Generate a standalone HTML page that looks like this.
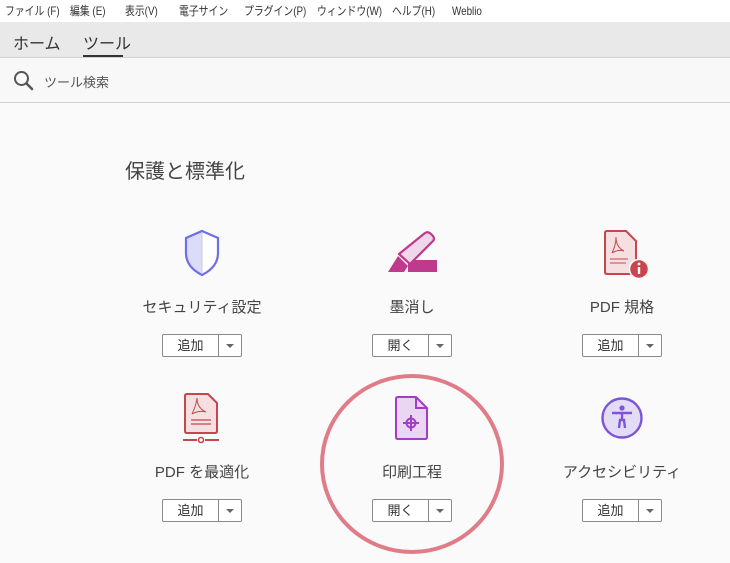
<!DOCTYPE html>
<html><head><meta charset="utf-8"><style>
*{margin:0;padding:0;box-sizing:border-box}
body{width:730px;height:563px;overflow:hidden;background:#fafafa;font-family:"Liberation Sans","Noto Sans CJK JP",sans-serif;color:#4b4b4b;position:relative}
.menu{position:absolute;left:0;top:0;width:730px;height:22px;background:#fff;font-size:12px;color:#333}
.menu span{position:absolute;top:3px;line-height:16px;white-space:nowrap;transform:scaleX(0.82);transform-origin:0 0}
.tabs{position:absolute;left:0;top:22px;width:730px;height:36px;background:#e9e9e9;border-bottom:1px solid #d0d0d0}
.tabs span{position:absolute;top:8px;font-size:16px;color:#333}
.ul{position:absolute;left:83px;top:33px;width:40px;height:2px;background:#333}
.search{position:absolute;left:0;top:59px;width:730px;height:44px;background:#f8f8f8;border-bottom:1px solid #cfcfcf}
.h{position:absolute;left:125px;top:155px;font-size:20px;color:#444}
.lab{position:absolute;width:200px;text-align:center;font-size:15px;color:#444;white-space:nowrap}
.btn{position:absolute;width:80px;height:23px;border:1px solid #8a8a8a;border-radius:2px;background:#fff;font-size:13px;color:#333}
.btn .t{position:absolute;left:0;top:1px;width:55px;text-align:center;line-height:19px}
.btn .d{position:absolute;left:55px;top:0;width:1px;height:21px;background:#8a8a8a}
.btn .a{position:absolute;left:63px;top:9px;border-left:4px solid transparent;border-right:4px solid transparent;border-top:4px solid #666}
svg{position:absolute}
</style></head><body>
<div class="menu">
<span style="left:5px">ファイル (F)</span><span style="left:70px">編集 (E)</span><span style="left:125px">表示(V)</span><span style="left:179px">電子サイン</span><span style="left:244px">プラグイン(P)</span><span style="left:317px">ウィンドウ(W)</span><span style="left:392px">ヘルプ(H)</span><span style="left:452px">Weblio</span>
</div>
<div class="tabs"><span style="left:13px">ホーム</span><span style="left:83px">ツール</span><div class="ul"></div></div>
<div class="search">
<svg style="left:13px;top:11px" width="22" height="22" viewBox="0 0 22 22"><circle cx="8.5" cy="8.5" r="6.5" fill="none" stroke="#555" stroke-width="2"/><line x1="13.5" y1="13.5" x2="19" y2="19" stroke="#555" stroke-width="2.5" stroke-linecap="round"/></svg>
<span style="position:absolute;left:44px;top:13px;font-size:13px;color:#555">ツール検索</span>
</div>
<div class="h">保護と標準化</div>

<svg style="left:183px;top:229px" width="38" height="48" viewBox="0 0 38 48"><path d="M19 2 L35 9 V24 C35 35 27 42 19 46 C11 42 3 35 3 24 V9 Z" fill="#dcdcf8"/><path d="M19 2 L35 9 V24 C35 35 27 42 19 46 Z" fill="#fff"/><path d="M19 2 L35 9 V24 C35 35 27 42 19 46 C11 42 3 35 3 24 V9 Z" fill="none" stroke="#6e6ee8" stroke-width="2.2"/><line x1="19" y1="3" x2="19" y2="45" stroke="#c8c8ee" stroke-width="1"/></svg>
<svg style="left:386px;top:230px" width="52" height="46" viewBox="0 0 52 46"><rect x="22" y="30" width="29" height="12" fill="#bf3a8c"/><path d="M39 3 Q42 1 45 4 L47 6 Q49 9 47 11 L24 34 L13 24 Z" fill="#f0d6ea" stroke="#bf3a8c" stroke-width="2.2" stroke-linejoin="round"/><path d="M12 26 L22 36 L18 42 L2 42 Z" fill="#bf3a8c"/></svg>
<svg style="left:602px;top:229px" width="50" height="50" viewBox="0 0 50 50"><path d="M3 4 Q3 2 5 2 H24 L34 12 V43 Q34 45 32 45 H5 Q3 45 3 43 Z" fill="#f6dfe0" stroke="#c8454e" stroke-width="2"/><path d="M10 24 Q14 16 14 8 Q14 18 22 22 Q16 20 10 24" fill="none" stroke="#c8454e" stroke-width="1"/><line x1="8" y1="30" x2="26" y2="30" stroke="#c8454e"/><line x1="8" y1="34" x2="24" y2="34" stroke="#c8454e"/><circle cx="37" cy="40" r="9.5" fill="#c8454e" stroke="#fafafa" stroke-width="1.5"/><rect x="35.8" y="38" width="2.4" height="7" fill="#fff"/><circle cx="37" cy="35" r="1.4" fill="#fff"/></svg>
<svg style="left:182px;top:392px" width="40" height="54" viewBox="0 0 40 54"><path d="M3 4 Q3 2 5 2 H26 L35 11 V39 Q35 41 33 41 H5 Q3 41 3 39 Z" fill="#f6dfe0" stroke="#c8454e" stroke-width="2"/><path d="M10 22 Q14 14 15 6 Q15 16 24 20 Q17 18 10 22" fill="none" stroke="#c8454e" stroke-width="1"/><line x1="9" y1="28" x2="29" y2="28" stroke="#c8454e" stroke-width="1.2"/><line x1="9" y1="32" x2="29" y2="32" stroke="#c8454e" stroke-width="1.2"/><line x1="1" y1="48" x2="15" y2="48" stroke="#c8454e" stroke-width="2"/><line x1="23" y1="48" x2="37" y2="48" stroke="#c8454e" stroke-width="2"/><circle cx="19" cy="48" r="2.5" fill="#fff" stroke="#c8454e" stroke-width="1.6"/></svg>
<svg style="left:394px;top:396px" width="38" height="46" viewBox="0 0 38 46"><path d="M2 3 Q2 1 4 1 H22 L33 12 V41 Q33 43 31 43 H4 Q2 43 2 41 Z" fill="#ead6f2" stroke="#a43cc8" stroke-width="2"/><path d="M22 1 V12 H33" fill="none" stroke="#a43cc8" stroke-width="2"/><circle cx="17" cy="27" r="4.5" fill="none" stroke="#a43cc8" stroke-width="2"/><line x1="17" y1="19" x2="17" y2="35" stroke="#a43cc8" stroke-width="2"/><line x1="9" y1="27" x2="25" y2="27" stroke="#a43cc8" stroke-width="2"/></svg>
<svg style="left:600px;top:396px" width="44" height="44" viewBox="0 0 44 44"><circle cx="22" cy="22" r="19.5" fill="#e4dcf6" stroke="#7c55d8" stroke-width="2.4"/><circle cx="22" cy="12" r="2.6" fill="#7c55d8"/><path d="M12 17 H32 M22 17 V25 M19 32 L20 24 H24 L25 32" fill="none" stroke="#7c55d8" stroke-width="2.4"/></svg>

<div class="lab" style="left:102px;top:296px">セキュリティ設定</div>
<div class="lab" style="left:312px;top:296px">墨消し</div>
<div class="lab" style="left:522px;top:296px">PDF 規格</div>
<div class="lab" style="left:102px;top:461px">PDF を最適化</div>
<div class="lab" style="left:312px;top:461px">印刷工程</div>
<div class="lab" style="left:522px;top:461px">アクセシビリティ</div>

<div class="btn" style="left:162px;top:334px"><div class="t">追加</div><div class="d"></div><div class="a"></div></div>
<div class="btn" style="left:372px;top:334px"><div class="t">開く</div><div class="d"></div><div class="a"></div></div>
<div class="btn" style="left:582px;top:334px"><div class="t">追加</div><div class="d"></div><div class="a"></div></div>
<div class="btn" style="left:162px;top:499px"><div class="t">追加</div><div class="d"></div><div class="a"></div></div>
<div class="btn" style="left:372px;top:499px"><div class="t">開く</div><div class="d"></div><div class="a"></div></div>
<div class="btn" style="left:582px;top:499px"><div class="t">追加</div><div class="d"></div><div class="a"></div></div>

<svg style="left:316px;top:372px" width="192" height="184" viewBox="0 0 192 184"><ellipse cx="96" cy="92" rx="90" ry="88" fill="none" stroke="#e07c88" stroke-width="4"/></svg>
</body></html>
